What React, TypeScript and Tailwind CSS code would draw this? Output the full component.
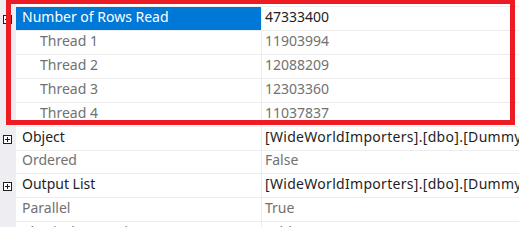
import React from "react";

type Row = {
  name: string;
  value: string;
  indent?: boolean;
  dim?: boolean;
  selected?: boolean;
  wide?: boolean;
  icon?: "plus" | "minus";
  h: string;
};

const rows: Row[] = [
  { name: "Number of Rows Read", value: "47333400", selected: true, icon: "minus", h: "h-[24px]" },
  { name: "Thread 1", value: "11903994", indent: true, dim: true, h: "h-[24px]" },
  { name: "Thread 2", value: "12088209", indent: true, dim: true, h: "h-[24px]" },
  { name: "Thread 3", value: "12303360", indent: true, dim: true, h: "h-[24px]" },
  { name: "Thread 4", value: "11037837", indent: true, dim: true, h: "h-[24px]" },
  { name: "Object", value: "[WideWorldImporters].[dbo].[DummyTable].[PK_DummyTable]", icon: "plus", wide: true, h: "h-[24px]" },
  { name: "Ordered", value: "False", dim: true, h: "h-[23px]" },
  { name: "Output List", value: "[WideWorldImporters].[dbo].[DummyTable].Id", icon: "plus", wide: true, h: "h-[24px]" },
  { name: "Parallel", value: "True", dim: true, h: "h-[24px]" },
  { name: "Physical Operation", value: "Table Scan", dim: true, h: "h-[24px]" },
];

function BoxIcon({ kind }: { kind: "plus" | "minus" }) {
  return (
    <svg width="9" height="9" viewBox="0 0 9 9" className="block">
      <rect x="0.5" y="0.5" width="8" height="8" fill="#ffffff" stroke="#1e1e1e" strokeWidth="1" />
      <line x1="2" y1="4.5" x2="7" y2="4.5" stroke="#1e1e1e" strokeWidth="1" />
      {kind === "plus" && <line x1="4.5" y1="2" x2="4.5" y2="7" stroke="#1e1e1e" strokeWidth="1" />}
    </svg>
  );
}

export default function App() {
  return (
    <div
      className="relative w-[519px] h-[227px] overflow-hidden bg-white flex"
      style={{ fontFamily: '"Noto Sans", "Open Sans", sans-serif' }}
    >
      <div className="flex-1 flex flex-col">
        <div className="h-[7px] flex shrink-0">
          <div className="w-[16px] bg-[#eeeef2]" />
          <div className="flex-1 border-b border-[#ededed]" />
        </div>
        {rows.map((r, i) => (
          <div key={i} className={`flex shrink-0 ${r.h}`}>
            <div className="w-[16px] shrink-0 bg-[#eeeef2] flex items-center pl-[3px]">
              {r.icon && <BoxIcon kind={r.icon} />}
            </div>
            <div
              className={`w-[245px] shrink-0 flex items-center border-b whitespace-nowrap overflow-hidden text-[14px] leading-[20px] pb-[4px] ${
                r.selected
                  ? "bg-[#0078d7] text-white border-[#ededed]"
                  : r.dim
                  ? "text-[#717171] border-[#ededed]"
                  : "text-[#1e1e1e] border-[#ededed]"
              } ${r.indent ? "pl-[24px]" : "pl-[6px]"}`}
            >
              {r.name}
            </div>
            <div className="w-[1px] shrink-0 bg-[#ededed]" />
            <div
              className={`flex-1 min-w-0 flex items-center border-b border-[#ededed] pl-[3px] pb-[4px] whitespace-nowrap overflow-hidden text-[14px] leading-[20px] ${
                r.wide ? "tracking-[0.3px]" : "tracking-[0px]"
              } ${r.dim ? "text-[#717171]" : "text-[#1e1e1e]"}`}
            >
              {r.value}
            </div>
          </div>
        ))}
      </div>
      <div className="w-[8px] shrink-0 bg-[#dddde2]" />
      <div className="absolute left-[6px] top-[-1px] w-[509px] h-[126px] border-[5px] border-[#ed1c24] pointer-events-none" />
    </div>
  );
}
